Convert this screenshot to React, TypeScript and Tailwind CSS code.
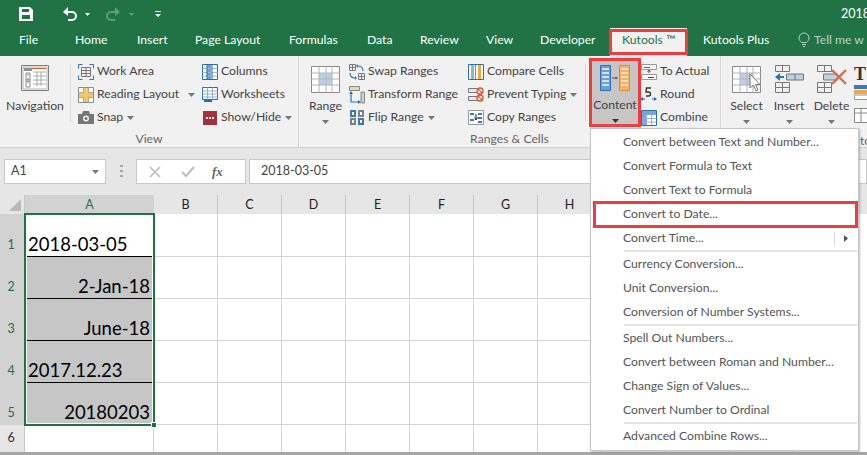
import type { ReactNode } from "react";

const tabs = [
  { label: "File", cls: "w-[56px] pl-[19px]" },
  { label: "Home", cls: "w-[61px] pl-[19px]" },
  { label: "Insert", cls: "w-[58px] pl-[20px]" },
  { label: "Page Layout", cls: "w-[94px] pl-[20px]" },
  { label: "Formulas", cls: "w-[78px] pl-[20px]" },
  { label: "Data", cls: "w-[53px] pl-[20px]" },
  { label: "Review", cls: "w-[66px] pl-[20px]" },
  { label: "View", cls: "w-[54px] pl-[20px]" },
  { label: "Developer", cls: "w-[90px] pl-[20px]" },
];

const columns = ["B", "C", "D", "E", "F", "G", "H", "I", "J", "K", "L"];

const rows = [
  { n: "1", text: "2018-03-05", right: false, h: "h-[43px]", fill: "bg-white" },
  { n: "2", text: "2-Jan-18", right: true, h: "h-[42px]", fill: "bg-[#c6c6c6]" },
  { n: "3", text: "June-18", right: true, h: "h-[42px]", fill: "bg-[#c6c6c6]" },
  { n: "4", text: "2017.12.23", right: false, h: "h-[42px]", fill: "bg-[#c6c6c6]" },
  { n: "5", text: "20180203", right: true, h: "h-[42px]", fill: "bg-[#c6c6c6]" },
];

const Caret = ({ className = "" }: { className?: string }) => (
  <svg width="7" height="4" viewBox="0 0 7 4" className={className}>
    <path d="M0 0h7L3.500 4z" fill="#777" />
  </svg>
);

function SmallButton({ icon, label, caret }: { icon: ReactNode; label: string; caret?: string }) {
  return (
    <div className="flex h-[23px] items-center gap-[3px] whitespace-nowrap">
      <div className="flex w-[17px] shrink-0 justify-center">{icon}</div>
      <span>{label}</span>
      {caret && <Caret className={caret} />}
    </div>
  );
}

function BigButton({ icon, label, cls }: { icon: ReactNode; label: string; cls: string }) {
  return (
    <div className={`flex h-[72px] shrink-0 flex-col items-center pt-[9px] ${cls}`}>
      <div className="flex h-[28px] items-center">{icon}</div>
      <span className="mt-[4px] leading-[17px]">{label}</span>
      <Caret className="mt-[6px]" />
    </div>
  );
}

const GridIcon = ({ cursor }: { cursor?: boolean }) => (
  <svg width="29" height="27" viewBox="0 0 29 27">
    <path d="M.5.5h28v26H.5z" fill="#fff" stroke="#8a8a8a" />
    <path d="M8 7h13v12H8z" fill="#bcd0e6" />
    <path d="M.5 7h28M.5 13h28M.5 19h28M8 .5v26M15 .5v26M21 .5v26" stroke="#b4b4b4" fill="none" />
    {cursor && <path d="M18 8v14l3.500-3 2.500 6 2-1-2.500-5.500h4.500z" fill="#fff" stroke="#777" />}
  </svg>
);

const WorkAreaIcon = () => (
  <svg width="16" height="16" viewBox="0 0 16 16">
    <path d="M.5 4.500V.5h4M11.500.5h4v4M15.500 11.500v4h-4M4.500 15.500h-4v-4" fill="none" stroke="#2b72bd" />
    <path d="M3.500 3.500h9v9h-9zM3.500 6.500h9M3.500 9.500h9M8 3.500v9" fill="none" stroke="#777" />
  </svg>
);

const ReadingIcon = () => (
  <svg width="16" height="16" viewBox="0 0 16 16">
    <path d="M.5.5h15v15H.5z" fill="#fff" stroke="#888" />
    <path d="M.5 5.500h15M.5 10.500h15M5.500.5v15M10.500.5v15" stroke="#aaa" />
    <path d="M6 1h4v14H6zM1 6h14v4H1z" fill="#f6c75f" />
  </svg>
);

const CameraIcon = () => (
  <svg width="16" height="13" viewBox="0 0 16 13">
    <path d="M0 3h4l1-3h6l1 3h4v10H0z" fill="#757575" />
    <circle cx="8" cy="7.500" r="3" fill="#f1f1f1" />
    <circle cx="8" cy="7.500" r="1.500" fill="#757575" />
  </svg>
);

const ColumnsIcon = () => (
  <svg width="16" height="16" viewBox="0 0 16 16">
    <path d="M.5.5h15v15H.5z" fill="#fff" stroke="#2b6cb0" />
    <path d="M5 1h4v14H5z" fill="#6f9fd0" />
    <path d="M.5 4.500h15M.5 8.500h15M.5 12h15" stroke="#9dbbdc" />
    <path d="M5 .5v15M10 .5v15" stroke="#2b6cb0" />
  </svg>
);

const SheetsIcon = () => (
  <svg width="16" height="16" viewBox="0 0 16 16">
    <path d="M.5.5h15v12H.5z" fill="#fff" stroke="#2b6cb0" />
    <path d="M.5 4h15M.5 7h15M.5 10h15M5.500.5v12M10.500.5v12" stroke="#8fb2d8" />
    <path d="M2 13h8v2H2z" fill="#2b6cb0" />
  </svg>
);

const ShowHideIcon = () => (
  <svg width="14" height="14" viewBox="0 0 14 14">
    <path d="M0 0h14v14H0z" fill="#a4323c" />
    <path d="M3 6h2v2H3zM6 6h2v2H6zM9 6h2v2H9z" fill="#fff" />
  </svg>
);

const SwapIcon = () => (
  <svg width="16" height="16" viewBox="0 0 16 16">
    <path d="M.5.5h6v6h-6zM9.500 9.500h6v6h-6zM.5 3.500h6M3.500.5v6M9.500 12.500h6M12.500 9.500v6" fill="none" stroke="#7a7a7a" />
    <path d="M9 2c3 0 5 1 5 5M1 9c0 4 2 5 5 5" fill="none" stroke="#2b72bd" strokeWidth="1.200" />
    <path d="M9 0v4L7 2zM6 12v4l2-2z" fill="#2b72bd" />
  </svg>
);

const TransformIcon = () => (
  <svg width="16" height="18" viewBox="0 0 16 18">
    <path d="M.5.5h10v4H.5z" fill="#e8d9a8" stroke="#888" />
    <path d="M12 6h3.500v11H12z" fill="#ccc" stroke="#777" strokeWidth="0.800" />
    <path d="M2 6v10h8" fill="none" stroke="#2b72bd" strokeWidth="1.200" />
    <path d="M0 8l2-3 2 3zM9 14l3 2-3 2z" fill="#2b72bd" />
  </svg>
);

const FlipIcon = () => (
  <svg width="14" height="15" viewBox="0 0 14 15">
    <path d="M0 0h6v7H0zM8 8h6v7H8z" fill="#3a77bb" />
    <path d="M8 0h6v7H8zM0 8h6v7H0z" fill="#808080" />
    <path d="M2 2h2v3H2zM10 2h2v3h-2zM2 10h2v3H2zM10 10h2v3h-2z" fill="#fff" />
  </svg>
);

const CompareIcon = () => (
  <svg width="16" height="16" viewBox="0 0 16 16">
    <path d="M.5.5h15v15H.5z" fill="#fff" stroke="#2b6cb0" />
    <path d="M3 1h3v14H3z" fill="#8fb2d8" />
    <path d="M10 1h3v14h-3z" fill="#f0a73f" />
    <path d="M7.500 1v14" stroke="#888" />
  </svg>
);

const PreventIcon = () => (
  <svg width="16" height="15" viewBox="0 0 16 15">
    <path d="M.5 1.500h10v4H.5zM.5 9.500h10v4H.5z" fill="#e8e8e8" stroke="#777" />
    <circle cx="12" cy="4" r="3" fill="#fff" stroke="#d9532c" strokeWidth="1.300" />
    <circle cx="12" cy="11" r="3" fill="#fff" stroke="#d9532c" strokeWidth="1.300" />
    <path d="M10 2l4 4M10 9l4 4" stroke="#d9532c" strokeWidth="1.200" />
  </svg>
);

const CopyRangesIcon = () => (
  <svg width="16" height="15" viewBox="0 0 16 15">
    <path d="M.5.5h15v14H.5z" fill="#fff" stroke="#999" />
    <path d="M2 3h4v2H2zM10 3h4v2h-4zM2 9h4v2H2zM10 7h4v2h-4zM10 11h4v2h-4z" fill="#3a77bb" />
    <path d="M8 4v5M6.500 7.500L8 10l1.500-2.500" fill="none" stroke="#222" />
  </svg>
);

const ContentIcon = () => (
  <svg width="30" height="26" viewBox="0 0 30 26">
    <path d="M.5.500h10v25H.5z" fill="#6d9fd6" stroke="#2f6fb5" />
    <path d="M19.500.5h10v25h-10z" fill="#f4b266" stroke="#e58a25" />
    <path d="M2 3h7v2H2zM2 7h7v2H2zM2 11h7v2H2zM2 15h7v2H2zM2 19h7v2H2z" fill="#cfe0f2" />
    <path d="M21 3h7v2h-7zM21 7h7v2h-7zM21 11h7v2h-7zM21 15h7v2h-7zM21 19h7v2h-7z" fill="#fbdcae" />
    <path d="M12 13h4" stroke="#555" />
    <path d="M15.500 11.500l2.500 1.500-2.500 1.500z" fill="#555" />
  </svg>
);

const ToActualIcon = () => (
  <svg width="16" height="16" viewBox="0 0 16 16">
    <path d="M.5.5h15v5H.5zM.5 10.500h15v5H.5z" fill="#fff" stroke="#999" />
    <path d="M3 3h6v1H3z" fill="#b3402a" />
    <path d="M7 13h6v1H7z" fill="#2b4fa0" />
    <path d="M8 9V6.500M6.500 8L8 6l1.500 2" fill="none" stroke="#555" />
  </svg>
);

const RoundIcon = () => (
  <svg width="17" height="16" viewBox="0 0 17 16">
    <path d="M1 12h15" stroke="#2b6cb0" strokeDasharray="4 7" />
    <path d="M3 10l-3 2 3 2zM14 10l3 2-3 2z" fill="#2b6cb0" />
    <path d="M11 1H6.500L6 5h2.500a2 2 0 010 4H6" fill="none" stroke="#333" strokeWidth="1.400" />
  </svg>
);

const CombineIcon = () => (
  <svg width="16" height="16" viewBox="0 0 16 16">
    <path d="M.5.5h15v15H.5z" fill="#fff" stroke="#2b6cb0" />
    <path d="M1 1h14v4H1z" fill="#7aa5d6" />
    <path d="M1 1h4v14H1z" fill="#7aa5d6" />
    <path d="M5.500 5v10M10.500 5v10M1 8.500h14M1 12h14" stroke="#8fb2d8" />
  </svg>
);

const InsertIcon = () => (
  <svg width="29" height="28" viewBox="0 0 29 28">
    <path d="M.5.5h14v6H.5zM.5 17.500h14v10H.5zM.5 22.500h14M7.500 17.500v10M7.500.5v6" fill="none" stroke="#777" />
    <path d="M11.500 9h17v6h-17z" fill="#bcd0e6" stroke="#777" />
    <path d="M20 9v6" stroke="#777" />
    <path d="M1 12h8" stroke="#2b72bd" strokeWidth="2" />
    <path d="M5 8L0 12l5 4z" fill="#2b72bd" />
  </svg>
);

const DeleteIcon = () => (
  <svg width="30" height="28" viewBox="0 0 30 28">
    <path d="M.5.5h14v6H.5zM.5 17.500h14v10H.5zM.5 22.500h14M7.500 17.500v10M7.500.5v6" fill="none" stroke="#777" />
    <path d="M6.500 9h14v6h-14z" fill="#bcd0e6" stroke="#777" />
    <path d="M15 5l14 14M29 5L15 19" stroke="#dc6a4a" strokeWidth="2.400" />
  </svg>
);

function Ribbon() {
  return (
    <div className="relative flex h-[92px] shrink-0 border-b border-[#d0d0d0] bg-[#f1f1f1] text-[12.200px] text-[#444]">
      <div className="flex h-[91px] w-[299px] shrink-0 flex-col border-r border-[#d8d8d8]">
        <div className="flex h-[76px]">
          <div className="my-[8px] flex w-[71px] shrink-0 flex-col items-center border-r border-[#dadada] pt-[1px]">
            <svg width="28" height="26" viewBox="0 0 28 26">
              <path d="M.5.500h27v25H.5z" fill="#fff" stroke="#808080" />
              <path d="M2 2h24v22H2z" fill="#fff" stroke="#b0b0b0" />
              <path d="M3 3h8v3H3z" fill="#909090" />
              <path d="M11 3h14v1H11z" fill="#e05a2b" />
              <path d="M5 8h4v14H5z" fill="#fff" stroke="#888" />
              <path d="M6 10h2M6 14h2v3H6z" fill="none" stroke="#888" />
              <path d="M12 7h13M12 11h13M12 15h13M12 19h13M16 7v14M20 7v14" stroke="#aaa" fill="none" />
            </svg>
            <span className="mt-[6px] leading-[17px]">Navigation</span>
          </div>
          <div className="flex w-[125px] shrink-0 flex-col pl-[6px] pt-[4px]">
            <SmallButton icon={<WorkAreaIcon />} label="Work Area" />
            <SmallButton icon={<ReadingIcon />} label="Reading Layout" caret="ml-[6px]" />
            <SmallButton icon={<CameraIcon />} label="Snap" caret="ml-[1px]" />
          </div>
          <div className="flex flex-col pl-[5px] pt-[4px]">
            <SmallButton icon={<ColumnsIcon />} label="Columns" />
            <SmallButton icon={<SheetsIcon />} label="Worksheets" />
            <SmallButton icon={<ShowHideIcon />} label="Show/Hide" caret="ml-[1px]" />
          </div>
        </div>
        <div className="text-center leading-[17px] text-[#666]">View</div>
      </div>

      <div className="flex h-[91px] w-[422px] shrink-0 flex-col border-r border-[#d8d8d8]">
        <div className="flex h-[76px]">
          <BigButton icon={<GridIcon />} label="Range" cls="w-[49px] pl-[4px]" />
          <div className="flex w-[119px] shrink-0 flex-col pt-[4px]">
            <SmallButton icon={<SwapIcon />} label="Swap Ranges" />
            <SmallButton icon={<TransformIcon />} label="Transform Range" />
            <SmallButton icon={<FlipIcon />} label="Flip Range" caret="ml-[1px]" />
          </div>
          <div className="flex w-[118px] shrink-0 flex-col pt-[4px]">
            <SmallButton icon={<CompareIcon />} label="Compare Cells" />
            <SmallButton icon={<PreventIcon />} label="Prevent Typing" caret="ml-[1px]" />
            <SmallButton icon={<CopyRangesIcon />} label="Copy Ranges" />
          </div>
          <div className="my-[8px] w-[1px] shrink-0 bg-[#dadada]" />
          <div className="ml-[4px] mt-[2px] flex h-[69px] w-[50px] shrink-0 flex-col items-center bg-[#c6c6c6] pt-[7px]">
            <ContentIcon />
            <span className="mt-[5px] leading-[17px]">Content</span>
            <Caret className="mt-[6px] [&_path]:fill-[#333]" />
          </div>
          <div className="flex flex-col pt-[4px]">
            <SmallButton icon={<ToActualIcon />} label="To Actual" />
            <SmallButton icon={<RoundIcon />} label="Round" />
            <SmallButton icon={<CombineIcon />} label="Combine" />
          </div>
        </div>
        <div className="text-center leading-[17px] text-[#666]">Ranges &amp; Cells</div>
      </div>

      <div className="flex h-[76px] overflow-hidden pl-[4px]">
        <BigButton icon={<GridIcon cursor />} label="Select" cls="w-[43px]" />
        <BigButton icon={<InsertIcon />} label="Insert" cls="w-[42px]" />
        <BigButton icon={<DeleteIcon />} label="Delete" cls="w-[43px]" />
        <div className="flex flex-col pl-[1px] pt-[8px]">
          <span className="font-['Liberation_Serif',serif] text-[18px] font-bold leading-[20px] text-[#333]">T</span>
          <svg width="14" height="15" viewBox="0 0 14 15" className="mt-[1px]">
            <path d="M0 0h14v4H0z" fill="#3a77bb" />
            <path d="M0 5h14v4H0z" fill="#f0a73f" />
            <path d="M.5 10h13v4.500H.5z" fill="#fff" stroke="#999" />
          </svg>
          <svg width="14" height="15" viewBox="0 0 14 15" className="mt-[8px]">
            <path d="M.5.5h13v14H.5zM.5 5h13M7 .5v14" fill="#fff" stroke="#888" />
          </svg>
        </div>
      </div>
      {/* group label showing past the open menu */}
      <span className="absolute left-[860px] top-[76px] leading-[17px] text-[#666]">to</span>
    </div>
  );
}

function FormulaBar() {
  return (
    <div className="flex h-[47px] shrink-0 items-start bg-[#e6e6e6] pl-[4px] pt-[11px] text-[12.500px]">
      <div className="flex h-[25px] w-[102px] shrink-0 items-center justify-between border border-[#c8c8c8] bg-white px-[6px] text-[#444]">
        <span>A1</span>
        <Caret />
      </div>
      <div className="flex w-[30px] shrink-0 flex-col items-center gap-[3px] pt-[6px]">
        <span className="h-[2px] w-[3px] bg-[#a8a8a8]" />
        <span className="h-[2px] w-[3px] bg-[#a8a8a8]" />
        <span className="h-[2px] w-[3px] bg-[#a8a8a8]" />
      </div>
      <div className="flex h-[25px] w-[110px] shrink-0 items-center border border-[#c8c8c8] bg-white">
        <svg width="12" height="12" viewBox="0 0 12 12" className="ml-[12px]">
          <path d="M1 1l10 10M11 1L1 11" stroke="#bdbdbd" strokeWidth="1.600" />
        </svg>
        <svg width="14" height="12" viewBox="0 0 14 12" className="ml-[20px]">
          <path d="M1 6l4 4 8-9" fill="none" stroke="#bdbdbd" strokeWidth="2" />
        </svg>
        <span className="ml-[17px] font-['Liberation_Serif',serif] text-[13px] font-bold italic text-[#666]">fx</span>
      </div>
      <div className="ml-[3px] flex h-[25px] flex-1 items-center border border-[#c8c8c8] bg-white pl-[11px] text-[#444]">
        2018-03-05
      </div>
    </div>
  );
}

function Sheet() {
  return (
    <div className="relative flex flex-1 flex-col overflow-hidden bg-white text-[12.500px]">
      <div className="flex h-[19px] shrink-0 bg-[#e6e6e6] leading-[19px] text-[#222]">
        <div className="relative w-[25px] shrink-0 border-r border-[#c6c6c6]">
          <svg width="12" height="12" viewBox="0 0 12 12" className="absolute bottom-[3px] right-[3px]">
            <path d="M12 0v12H0z" fill="#b8b8b8" />
          </svg>
        </div>
        <div className="w-[129px] shrink-0 bg-[#d2d2d2] text-center text-[#217346]">A</div>
        {columns.map((c) => (
          <div key={c} className="w-[64px] shrink-0 border-r border-[#c6c6c6] text-center">
            {c}
          </div>
        ))}
      </div>
      {rows.map((r) => (
        <div key={r.n} className={`flex shrink-0 ${r.h}`}>
          <div className="flex w-[25px] shrink-0 items-end justify-center border-r border-[#c6c6c6] bg-[#d2d2d2] pb-[2px] pr-[2px] text-[#217346]">
            {r.n}
          </div>
          <div
            className={`flex w-[129px] shrink-0 items-end border-b border-black pl-[3px] pr-[4px] font-['Lato',sans-serif] text-[18.500px] leading-[24px] text-black ${r.fill} ${
              r.right ? "justify-end" : "justify-start"
            }`}
          >
            {r.text}
          </div>
          {columns.map((c) => (
            <div key={c} className="w-[64px] shrink-0 border-b border-r border-[#d4d4d4]" />
          ))}
        </div>
      ))}
      <div className="flex flex-1">
        <div className="flex w-[25px] shrink-0 items-center justify-center border-r border-[#c6c6c6] bg-[#e6e6e6] pr-[2px] text-[#333]">6</div>
        <div className="w-[129px] shrink-0 border-r border-[#d4d4d4]" />
        {columns.map((c) => (
          <div key={c} className="w-[64px] shrink-0 border-r border-[#d4d4d4]" />
        ))}
      </div>
      <div className="h-[3px] shrink-0 bg-[#a6a6a6]" />

      {/* selection around A1:A5 */}
      <div className="absolute left-[24px] top-[18px] h-[213px] w-[131px] border-2 border-[#217346] shadow-[inset_0_0_0_1px_#fff]">
        <div className="absolute bottom-[-4px] right-[-4px] h-[6px] w-[6px] border border-white bg-[#217346]" />
      </div>
    </div>
  );
}

function Menu() {
  const Item = ({ label }: { label: string }) => (
    <div className="flex h-[24px] items-center pl-[32px]">{label}</div>
  );
  const Sep = () => <div className="ml-[33px] mr-[1px] h-[2px] bg-[#e4e4e4]" />;
  return (
    <div className="absolute left-[590px] top-[128px] z-10 h-[323px] w-[269px] border border-[#c4c4c4] bg-white py-[1px] text-[12.200px] text-[#555] shadow-[1px_1px_2px_rgba(0,0,0,0.25)]">
      <Item label="Convert between Text and Number..." />
      <Item label="Convert Formula to Text" />
      <Item label="Convert Text to Formula" />
      <Item label="Convert to Date..." />
      <div className="flex h-[24px] items-center justify-between pl-[32px] pr-[10px]">
        <span>Convert Time...</span>
        <div className="flex h-[14px] items-center border-l border-[#dcdcdc] pl-[9px]">
          <svg width="4" height="7" viewBox="0 0 4 7">
            <path d="M0 0l4 3.500L0 7z" fill="#555" />
          </svg>
        </div>
      </div>
      <Sep />
      <Item label="Currency Conversion..." />
      <Item label="Unit Conversion..." />
      <Item label="Conversion of Number Systems..." />
      <Sep />
      <Item label="Spell Out Numbers..." />
      <Item label="Convert between Roman and Number..." />
      <Item label="Change Sign of Values..." />
      <Item label="Convert Number to Ordinal" />
      <Sep />
      <Item label="Advanced Combine Rows..." />
      {/* red callout on Convert to Date */}
      <div className="absolute left-[2px] top-[72px] h-[27px] w-[265px] border-[3px] border-[#f23b3f]" />
    </div>
  );
}

export default function App() {
  return (
    <div className="relative flex h-[455px] w-[867px] flex-col overflow-hidden font-['Lato',sans-serif]">
      <div className="h-[56px] shrink-0 bg-[#217346] text-white">
        <div className="flex h-[28px] items-center">
          <svg width="14" height="14" viewBox="0 0 14 14" className="ml-[19px]">
            <path d="M0 0h11l3 3v11H0z" fill="#fff" />
            <path d="M3 2h7v3H3z" fill="#217346" />
            <path d="M3 8h8v4H3z" fill="#217346" />
          </svg>
          <svg width="15" height="14" viewBox="0 0 15 14" className="ml-[29px]">
            <path d="M2 5h8a4 4 0 010 8H6" fill="none" stroke="#fff" strokeWidth="2" />
            <path d="M6 0v9L1 5z" fill="#fff" />
          </svg>
          <svg width="5" height="3" viewBox="0 0 5 3" className="ml-[8px]">
            <path d="M0 0h5L2.500 3z" fill="#fff" />
          </svg>
          <svg width="15" height="14" viewBox="0 0 15 14" className="ml-[16px]">
            <path d="M13 5H5a4 4 0 000 8h4" fill="none" stroke="#5f9c7c" strokeWidth="2" />
            <path d="M9 0v9l5-4z" fill="#5f9c7c" />
          </svg>
          <svg width="5" height="3" viewBox="0 0 5 3" className="ml-[8px]">
            <path d="M0 0h5L2.500 3z" fill="#5f9c7c" />
          </svg>
          <svg width="6" height="6" viewBox="0 0 6 6" className="ml-[21px]">
            <path d="M0 0h6v1H0zM0 3h6L3 6z" fill="#fff" />
          </svg>
          <span className="ml-auto w-[26px] overflow-hidden whitespace-nowrap text-[12.500px]">2018</span>
        </div>
        <div className="flex h-[28px] items-start text-[12.200px] leading-[24px]">
          {tabs.map((t) => (
            <div key={t.label} className={`shrink-0 ${t.cls}`}>
              {t.label}
            </div>
          ))}
          <div className="relative h-[28px] w-[77px] shrink-0 bg-[#f1f1f1] pl-[12px] text-[#217346]">
            Kutools ™
            <div className="absolute inset-x-[-1px] bottom-[1px] top-[1px] border-[3px] border-[#f23b3f]" />
          </div>
          <div className="w-[111px] shrink-0 pl-[16px]">Kutools Plus</div>
          <svg width="12" height="15" viewBox="0 0 12 15" className="mt-[4px] shrink-0">
            <path d="M3.500 10.500C2 9 1 8 1 6a5 5 0 0110 0c0 2-1 3-2.500 4.500zM4 12.500h4M5 14.500h2" fill="none" stroke="#b7d3c3" />
          </svg>
          <span className="ml-[4px] whitespace-nowrap text-[#b7d3c3]">Tell me w</span>
        </div>
      </div>
      <Ribbon />
      <FormulaBar />
      <Sheet />
      <Menu />
      {/* red callout on the Content button */}
      <div className="absolute left-[589px] top-[58px] h-[69px] w-[52px] border-[3px] border-[#f23b3f]" />
    </div>
  );
}
